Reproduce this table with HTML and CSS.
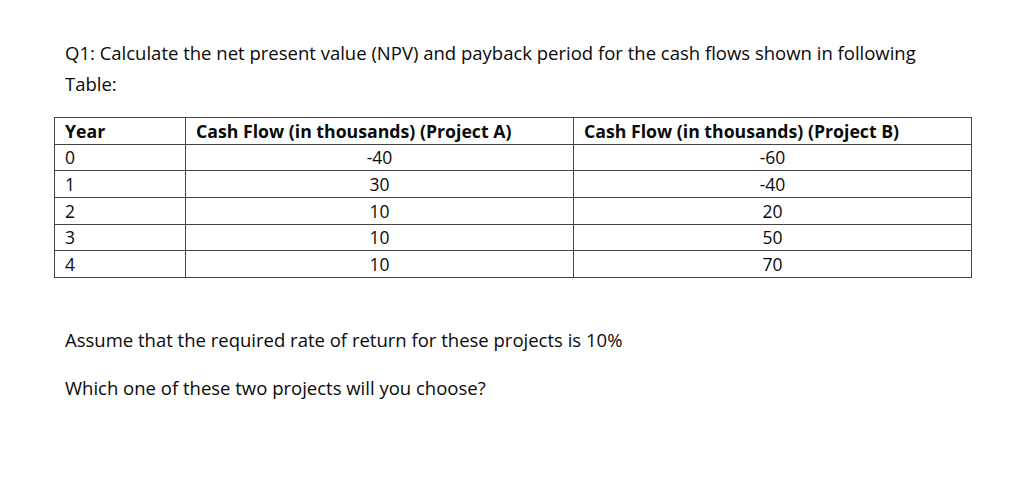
FILE: index.html
```html
<!DOCTYPE html>
<html>
<head>
<meta charset="utf-8">
<link rel="stylesheet" href="styles.css">
</head>
<body>
<div class="page">
  <p class="question">Q1: Calculate the net present value (NPV) and payback period for the cash flows shown in following<br>Table:</p>
  <table class="cf">
    <colgroup><col class="c1"><col class="c2"><col class="c3"></colgroup>
    <thead>
      <tr><th class="left">Year</th><th class="left">Cash Flow (in thousands) (Project A)</th><th class="left">Cash Flow (in thousands) (Project B)</th></tr>
    </thead>
    <tbody>
      <tr><td>0</td><td class="num">-40</td><td class="num">-60</td></tr>
      <tr><td>1</td><td class="num">30</td><td class="num">-40</td></tr>
      <tr><td>2</td><td class="num">10</td><td class="num">20</td></tr>
      <tr><td>3</td><td class="num">10</td><td class="num">50</td></tr>
      <tr><td>4</td><td class="num">10</td><td class="num">70</td></tr>
    </tbody>
  </table>
  <p class="note first">Assume that the required rate of return for these projects is 10%</p>
  <p class="note">Which one of these two projects will you choose?</p>
</div>
</body>
</html>
```
FILE: styles.css
```css
html, body { margin: 0; padding: 0; background: #fff; }
body { font-family: "Open Sans", "Liberation Sans", sans-serif; color: #0a0a0a; font-size: 18.5px; }
.page { padding: 37px 0 0 0; width: 1024px; height: 477px; box-sizing: border-box; }
.question { margin: 0 0 0 65px; line-height: 31px; }
.cf { margin: 18px 0 0 54px; width: 917px; border-collapse: collapse; table-layout: fixed; }
.c1 { width: 131px; } .c2 { width: 388px; } .c3 { width: 398px; }
.cf th, .cf td { border: 1px solid #444; height: 25.67px; padding: 0 10px; line-height: 20px; font-weight: normal; font-size: 17.5px; }
.cf th { font-weight: 700; text-align: left; font-size: 17.7px; }
.cf td.num { text-align: center; }
.note { margin: 0 0 0 65px; line-height: 24px; }
.note.first { margin-top: 50px; }
.note + .note { margin-top: 24px; }
```
